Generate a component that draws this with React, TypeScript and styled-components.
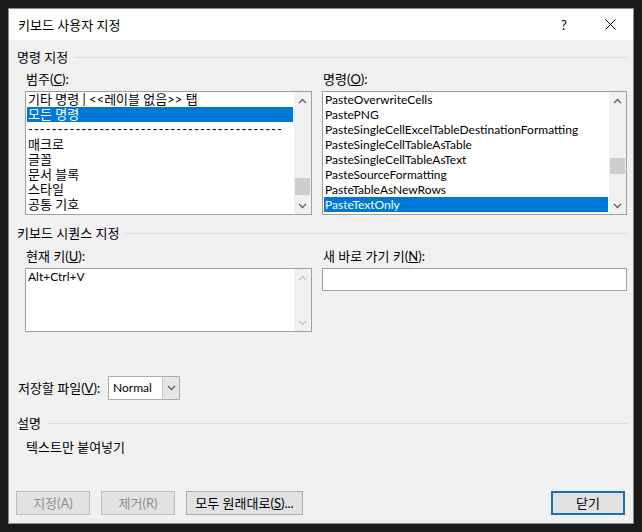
import React from "react";
import styled, { createGlobalStyle } from "styled-components";

const Global = createGlobalStyle`
  html, body { margin: 0; padding: 0; background: #1b1b1b; }
  body { font-family: "Lato", "Noto Sans CJK KR", sans-serif; font-size: 13px; color: #000; }
  #root { padding: 8px 0 0 8px; }
`;

const Dialog = styled.div`
  width: 624px;
  height: 514px;
  border: 1px solid #8a8a8a;
  background: #f0f0f0;
  display: flex;
  flex-direction: column;
`;

const TitleBar = styled.div`
  height: 31px;
  background: #fff;
  display: flex;
  align-items: center;
  padding-left: 9px;
`;

const Title = styled.div`
  flex: 1;
  line-height: 16px;
  color: #000;
`;

const TitleButton = styled.div<{ $w: number }>`
  width: ${(p) => p.$w}px;
  height: 31px;
  display: flex;
  align-items: center;
  justify-content: center;
  font-size: 13px;
  color: #000;
`;

const Main = styled.div`
  flex: 1;
  display: flex;
  flex-direction: column;
  padding: 9px 6px 0 8px;
`;

const GroupHeader = styled.div<{ $mt?: number }>`
  display: flex;
  align-items: center;
  gap: 6px;
  margin-top: ${(p) => p.$mt ?? 0}px;
  line-height: 16px;
  height: 16px;
`;

const HeaderLine = styled.div`
  flex: 1;
  height: 1px;
  background: #dcdcdc;
`;

const Columns = styled.div<{ $mt: number }>`
  display: grid;
  grid-template-columns: 287px 1fr;
  column-gap: 10px;
  margin-left: 8px;
  margin-top: ${(p) => p.$mt}px;
`;

const Column = styled.div`
  display: flex;
  flex-direction: column;
  gap: 4px;
`;

const Label = styled.div`
  line-height: 16px;
  height: 16px;
  padding-left: 1px;
  white-space: nowrap;
`;

const ListBox = styled.div<{ $h: number }>`
  height: ${(p) => p.$h}px;
  box-sizing: border-box;
  border: 1px solid #a0a0a0;
  background: #fff;
  display: grid;
  grid-template-columns: 1fr 17px;
`;

const Rows = styled.div`
  padding: 0 1px;
  overflow: hidden;
`;

const Row = styled.div<{ $sel?: boolean; $latin?: boolean; $dashes?: boolean }>`
  height: 15px;
  line-height: 15px;
  padding-left: 1px;
  white-space: nowrap;
  letter-spacing: ${(p) => (p.$dashes ? "1.1px" : "normal")};
  font-size: ${(p) => (p.$latin ? 12 : 13)}px;
  background: ${(p) => (p.$sel ? "#0078d7" : "transparent")};
  color: ${(p) => (p.$sel ? "#fff" : "#000")};
`;

const Scroll = styled.div`
  background: #f0f0f0;
  display: flex;
  flex-direction: column;
`;

const Arrow = styled.div`
  height: 17px;
  display: flex;
  align-items: center;
  justify-content: center;
`;

const Track = styled.div`
  flex: 1;
`;

const Thumb = styled.div<{ $top: number; $h: number }>`
  margin-top: ${(p) => p.$top}px;
  height: ${(p) => p.$h}px;
  margin-left: 1px;
  margin-right: 1px;
  background: #cdcdcd;
`;

const TextInput = styled.div`
  height: 23px;
  box-sizing: border-box;
  border: 1px solid #a0a0a0;
  background: #fff;
`;

const SaveRow = styled.div`
  display: grid;
  grid-template-columns: 91px 72px;
  align-items: center;
  margin-top: 44px;
`;

const Select = styled.div`
  height: 24px;
  box-sizing: border-box;
  border: 1px solid #acacac;
  background: #fff;
  display: flex;
  align-items: stretch;
`;

const SelectText = styled.div`
  flex: 1;
  padding-left: 4px;
  line-height: 22px;
  font-size: 12px;
`;

const SelectButton = styled.div`
  width: 16px;
  background: #e5e5e5;
  border-left: 1px solid #c8c8c8;
  display: flex;
  align-items: center;
  justify-content: center;
`;

const Description = styled.div`
  margin-top: 8px;
  margin-left: 9px;
  line-height: 16px;
`;

const Footer = styled.div`
  display: flex;
  align-items: center;
  gap: 11px;
  padding: 0 8px 8px 7px;
`;

const Button = styled.div<{ $w: number; $disabled?: boolean; $default?: boolean }>`
  width: ${(p) => p.$w}px;
  height: 24px;
  box-sizing: border-box;
  border: ${(p) => (p.$default ? "2px solid #1a6fb5" : "1px solid " + (p.$disabled ? "#bfbfbf" : "#adadad"))};
  background: #e1e1e1;
  color: ${(p) => (p.$disabled ? "#8f8f8f" : "#000")};
  display: flex;
  align-items: center;
  justify-content: center;
  line-height: 16px;
  white-space: nowrap;
`;

const Spacer = styled.div`
  flex: 1;
`;

const Chevron = ({ up, color = "#606060" }: { up?: boolean; color?: string }) => (
  <svg width="9" height="6" viewBox="0 0 9 6">
    <path
      d={up ? "M1 5 L4.5 1.5 L8 5" : "M1 1 L4.5 4.5 L8 1"}
      fill="none"
      stroke={color}
      strokeWidth="1.3"
    />
  </svg>
);

const ScrollBar = ({ thumb, disabled }: { thumb?: [number, number]; disabled?: boolean }) => {
  const c = disabled ? "#c6c6c6" : "#606060";
  return (
    <Scroll>
      <Arrow>
        <Chevron up color={c} />
      </Arrow>
      <Track>{thumb && <Thumb $top={thumb[0]} $h={thumb[1]} />}</Track>
      <Arrow>
        <Chevron color={c} />
      </Arrow>
    </Scroll>
  );
};

const categories = [
  "기타 명령 | <<레이블 없음>> 탭",
  "모든 명령",
  "-".repeat(43),
  "매크로",
  "글꼴",
  "문서 블록",
  "스타일",
  "공통 기호",
];

const commands = [
  "PasteOverwriteCells",
  "PastePNG",
  "PasteSingleCellExcelTableDestinationFormatting",
  "PasteSingleCellTableAsTable",
  "PasteSingleCellTableAsText",
  "PasteSourceFormatting",
  "PasteTableAsNewRows",
  "PasteTextOnly",
];

export default function App() {
  return (
    <>
      <Global />
      <Dialog>
        <TitleBar>
          <Title>키보드 사용자 지정</Title>
          <TitleButton $w={46}>?</TitleButton>
          <TitleButton $w={46}>
            <svg width="11" height="11" viewBox="0 0 11 11">
              <path d="M0.5 0.5 L10.5 10.5 M10.5 0.5 L0.5 10.5" stroke="#000" strokeWidth="1" />
            </svg>
          </TitleButton>
        </TitleBar>
        <Main>
          <GroupHeader>
            명령 지정
            <HeaderLine />
          </GroupHeader>
          <Columns $mt={6}>
            <Column>
              <Label>
                범주(<u>C</u>):
              </Label>
              <ListBox $h={124}>
                <Rows>
                  {categories.map((c, i) => (
                    <Row key={i} $sel={i === 1} $dashes={i === 2}>
                      {c}
                    </Row>
                  ))}
                </Rows>
                <ScrollBar thumb={[69, 17]} />
              </ListBox>
            </Column>
            <Column>
              <Label>
                명령(<u>O</u>):
              </Label>
              <ListBox $h={124}>
                <Rows>
                  {commands.map((c, i) => (
                    <Row key={i} $latin $sel={i === 7}>
                      {c}
                    </Row>
                  ))}
                </Rows>
                <ScrollBar thumb={[49, 16]} />
              </ListBox>
            </Column>
          </Columns>
          <GroupHeader $mt={10}>
            키보드 시퀀스 지정
            <HeaderLine />
          </GroupHeader>
          <Columns $mt={7}>
            <Column>
              <Label>
                현재 키(<u>U</u>):
              </Label>
              <ListBox $h={64}>
                <Rows>
                  <Row $latin>Alt+Ctrl+V</Row>
                </Rows>
                <ScrollBar disabled />
              </ListBox>
            </Column>
            <Column>
              <Label>
                새 바로 가기 키(<u>N</u>):
              </Label>
              <TextInput />
            </Column>
          </Columns>
          <SaveRow>
            <Label>
              저장할 파일(<u>V</u>):
            </Label>
            <Select>
              <SelectText>Normal</SelectText>
              <SelectButton>
                <Chevron />
              </SelectButton>
            </Select>
          </SaveRow>
          <GroupHeader $mt={15}>
            설명
            <HeaderLine />
          </GroupHeader>
          <Description>텍스트만 붙여넣기</Description>
          <Spacer />
        </Main>
        <Footer>
          <Button $w={74} $disabled>
            지정(A)
          </Button>
          <Button $w={74} $disabled>
            제거(R)
          </Button>
          <Button $w={117}>
            모두 원래대로(<u>S</u>)...
          </Button>
          <Spacer />
          <Button $w={74} $default>
            닫기
          </Button>
        </Footer>
      </Dialog>
    </>
  );
}
